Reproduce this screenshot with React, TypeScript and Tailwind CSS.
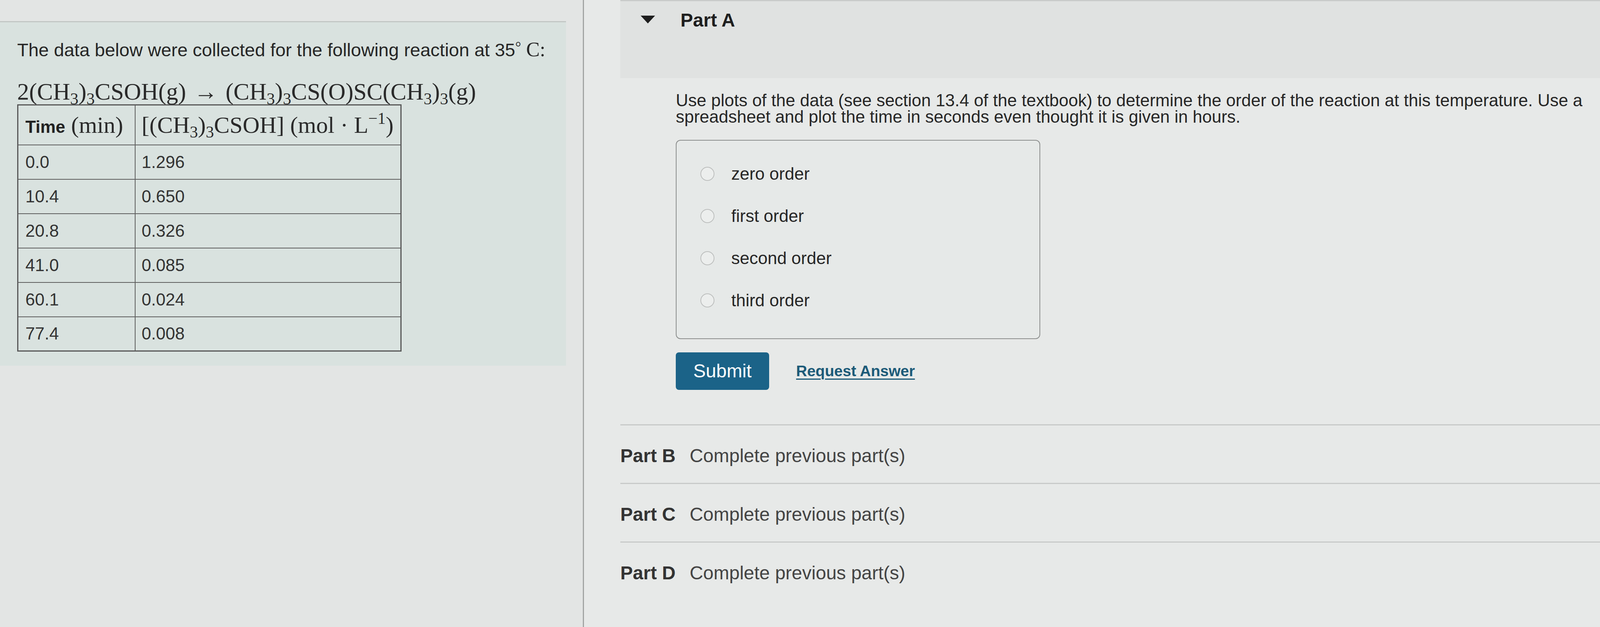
import React from "react";

const rows: [string, string][] = [
  ["0.0", "1.296"],
  ["10.4", "0.650"],
  ["20.8", "0.326"],
  ["41.0", "0.085"],
  ["60.1", "0.024"],
  ["77.4", "0.008"],
];

const options = ["zero order", "first order", "second order", "third order"];

function Sub({ children }: { children: React.ReactNode }) {
  return <span className="text-[0.7em] relative top-[0.28em]">{children}</span>;
}

function PartRow({ label }: { label: string }) {
  return (
    <div className="h-[150px] border-t-[3px] border-[#c8cac9] pt-[54px] flex items-start">
      <span className="text-[48px] leading-[48px] font-bold text-[#333]">{label}</span>
      <span className="ml-[36px] text-[48px] leading-[48px] text-[#444]">Complete previous part(s)</span>
    </div>
  );
}

export default function App() {
  return (
    <div className="w-full max-w-[4734px] h-[1605px] flex overflow-hidden bg-[#e6e8e7] text-[#222] font-['Liberation_Sans',Arial,sans-serif]">
      {/* Left column */}
      <div className="w-[1495px] shrink-0 border-r-[3px] border-[#a2a4a3] pt-[54px] bg-[#e3e5e4]">
        <div className="w-[1449px] h-[882px] bg-[#d9e2df] border-t-[3px] border-[#c2c7c5] pl-[44px] pt-[43px]">
          <p className="text-[47px] leading-[54px] text-[#262626] whitespace-nowrap">
            The data below were collected for the following reaction at 35
            <span className="font-['Liberation_Serif',serif] relative top-[-0.3em] text-[0.8em]">°</span>
            <span className="font-['Liberation_Serif',serif] text-[52px]"> C:</span>
          </p>
          <div className="mt-[46px] h-[62px] leading-[60px] text-[61px] text-[#2a2a2a] font-['Liberation_Serif',serif] whitespace-nowrap">
            2(CH<Sub>3</Sub>)<Sub>3</Sub>CSOH(g)
            <span className="mx-[20px]">→</span>
            (CH<Sub>3</Sub>)<Sub>3</Sub>CS(O)SC(CH<Sub>3</Sub>)<Sub>3</Sub>(g)
          </div>
          <table className="table-fixed border-collapse w-[981px] border-[3px] border-[#585858]">
            <colgroup>
              <col className="w-[300px]" />
              <col className="w-[681px]" />
            </colgroup>
            <thead>
              <tr className="h-[102px]">
                <th className="border-[2px] border-[#5e5e5e] text-left font-normal pl-[18px] whitespace-nowrap">
                  <span className="text-[44px] font-bold text-[#222]">Time</span>
                  <span className="text-[60px] font-['Liberation_Serif',serif] text-[#2a2a2a]"> (min)</span>
                </th>
                <th className="border-[2px] border-[#5e5e5e] text-left font-normal pl-[16px] whitespace-nowrap">
                  <span className="text-[60px] font-['Liberation_Serif',serif] text-[#2a2a2a]">
                    [(CH<Sub>3</Sub>)<Sub>3</Sub>CSOH] (mol · L
                    <span className="text-[0.7em] relative top-[-0.55em]">−1</span>)
                  </span>
                </th>
              </tr>
            </thead>
            <tbody>
              {rows.map(([t, c]) => (
                <tr key={t} className="h-[88px]">
                  <td className="border-[2px] border-[#5e5e5e] pl-[18px] text-[44px] text-[#333]">{t}</td>
                  <td className="border-[2px] border-[#5e5e5e] pl-[16px] text-[44px] text-[#333]">{c}</td>
                </tr>
              ))}
            </tbody>
          </table>
        </div>
      </div>

      {/* Right column */}
      <div className="flex-1 min-w-0 flex flex-col pl-[93px] bg-[#e7e9e8]">
        <div className="h-[200px] bg-[#e0e2e1] border-t-[3px] border-[#c9cbca] pl-[52px] pt-[25px] flex items-start">
          <svg width="37" height="20" viewBox="0 0 37 20" className="mt-[12px]">
            <polygon points="0,0 37,0 18.5,20" fill="#1e1e1e" />
          </svg>
          <span className="ml-[65px] text-[48px] leading-[48px] font-bold text-[#1e1e1e]">Part A</span>
        </div>

        <div className="pl-[142px] pr-[40px]">
          <p className="mt-[36px] max-w-[2960px] text-[44px] leading-[42px] text-[#262626]">
            Use plots of the data (see section 13.4 of the textbook) to determine the order of the reaction at this
            temperature. Use a spreadsheet and plot the time in seconds even thought it is given in hours.
          </p>

          <div className="mt-[38px] w-[933px] h-[510px] border-[2px] border-[#8c8e8d] rounded-[12px] pt-[31px] bg-[#e6e9e8]">
            {options.map((o) => (
              <div key={o} className="h-[108px] flex items-center pl-[61px]">
                <span className="w-[36px] h-[36px] rounded-full border-[2px] border-[#bdbfbe] bg-[#eceeed] shrink-0" />
                <span className="ml-[43px] text-[44px] text-[#262626]">{o}</span>
              </div>
            ))}
          </div>

          <div className="mt-[34px] flex items-center">
            <button className="w-[239px] h-[96px] rounded-[8px] bg-[#1b6388] text-white text-[48px] font-['Liberation_Sans',Arial,sans-serif]">
              Submit
            </button>
            <span className="ml-[69px] text-[39px] font-bold text-[#1c5a78] underline underline-offset-[6px] decoration-[3px]">
              Request Answer
            </span>
          </div>
        </div>

        <div className="mt-[88px]">
          <PartRow label="Part B" />
          <PartRow label="Part C" />
          <PartRow label="Part D" />
        </div>
      </div>
    </div>
  );
}
